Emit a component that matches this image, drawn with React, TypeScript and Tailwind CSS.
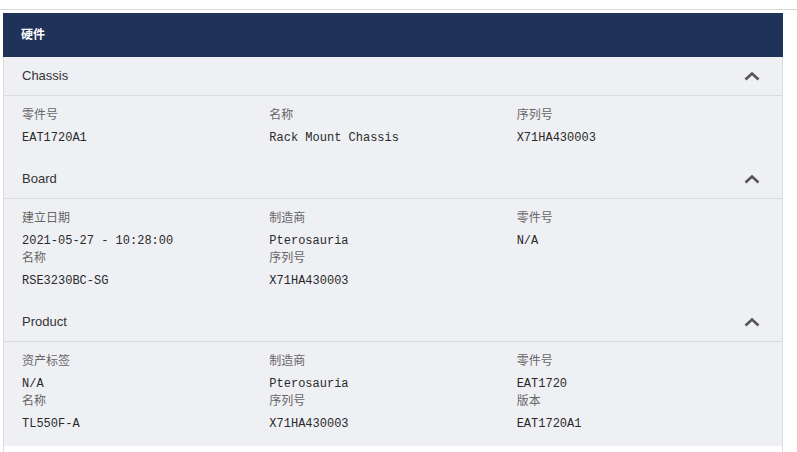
import React from 'react';

type Field = { label: string; value: string };

const sections: { title: string; fields: Field[] }[] = [
  {
    title: 'Chassis',
    fields: [
      { label: '零件号', value: 'EAT1720A1' },
      { label: '名称', value: 'Rack Mount Chassis' },
      { label: '序列号', value: 'X71HA430003' },
    ],
  },
  {
    title: 'Board',
    fields: [
      { label: '建立日期', value: '2021-05-27 - 10:28:00' },
      { label: '制造商', value: 'Pterosauria' },
      { label: '零件号', value: 'N/A' },
      { label: '名称', value: 'RSE3230BC-SG' },
      { label: '序列号', value: 'X71HA430003' },
    ],
  },
  {
    title: 'Product',
    fields: [
      { label: '资产标签', value: 'N/A' },
      { label: '制造商', value: 'Pterosauria' },
      { label: '零件号', value: 'EAT1720' },
      { label: '名称', value: 'TL550F-A' },
      { label: '序列号', value: 'X71HA430003' },
      { label: '版本', value: 'EAT1720A1' },
    ],
  },
];

const ChevronUp = () => (
  <svg width="16" height="10" viewBox="0 0 16 10" className="mr-[4px]">
    <path d="M1.5 8.5 L8 2.5 L14.5 8.5" fill="none" stroke="#555" strokeWidth="2.6" />
  </svg>
);

const Section: React.FC<{ title: string; fields: Field[] }> = ({ title, fields }) => (
  <div className="bg-[#eff0f4]">
    <div className="h-[39px] flex items-center justify-between px-[18px] border-b border-[#d9dbe0]">
      <span className="text-[13px] text-[#333] font-['Liberation_Sans','Noto_Sans_CJK_SC',sans-serif]">{title}</span>
      <ChevronUp />
    </div>
    <div className="grid grid-cols-3 px-[18px] pt-[11px] pb-[13px]">
      {fields.map((f, i) => (
        <div key={i}>
          <div className="text-[12px] leading-[17px] text-[#666] font-['Liberation_Sans','Noto_Sans_CJK_SC',sans-serif]">
            {f.label}
          </div>
          <div className="mt-[6px] text-[12px] leading-[17px] text-[#2a2a2a] font-['Liberation_Mono','Noto_Sans_CJK_SC',monospace]">
            {f.value}
          </div>
        </div>
      ))}
    </div>
  </div>
);

export default function App() {
  return (
    <div className="h-[452px] w-full bg-white flex flex-col overflow-hidden">
      <div className="h-[9px] shrink-0" />
      <div className="h-px bg-[#d8d8d8] shrink-0" />
      <div className="h-[3px] shrink-0" />
      <div className="ml-[3px] w-[780px] flex flex-col flex-1">
        <div className="h-[44px] shrink-0 bg-[#1f3358] flex items-center px-[18px] text-white text-[12px] font-bold font-['Liberation_Sans','Noto_Sans_CJK_SC',sans-serif]">
          硬件
        </div>
        <div className="flex-1 border-x border-[#dcdde1]">
          {sections.map((s) => (
            <Section key={s.title} title={s.title} fields={s.fields} />
          ))}
        </div>
      </div>
    </div>
  );
}
